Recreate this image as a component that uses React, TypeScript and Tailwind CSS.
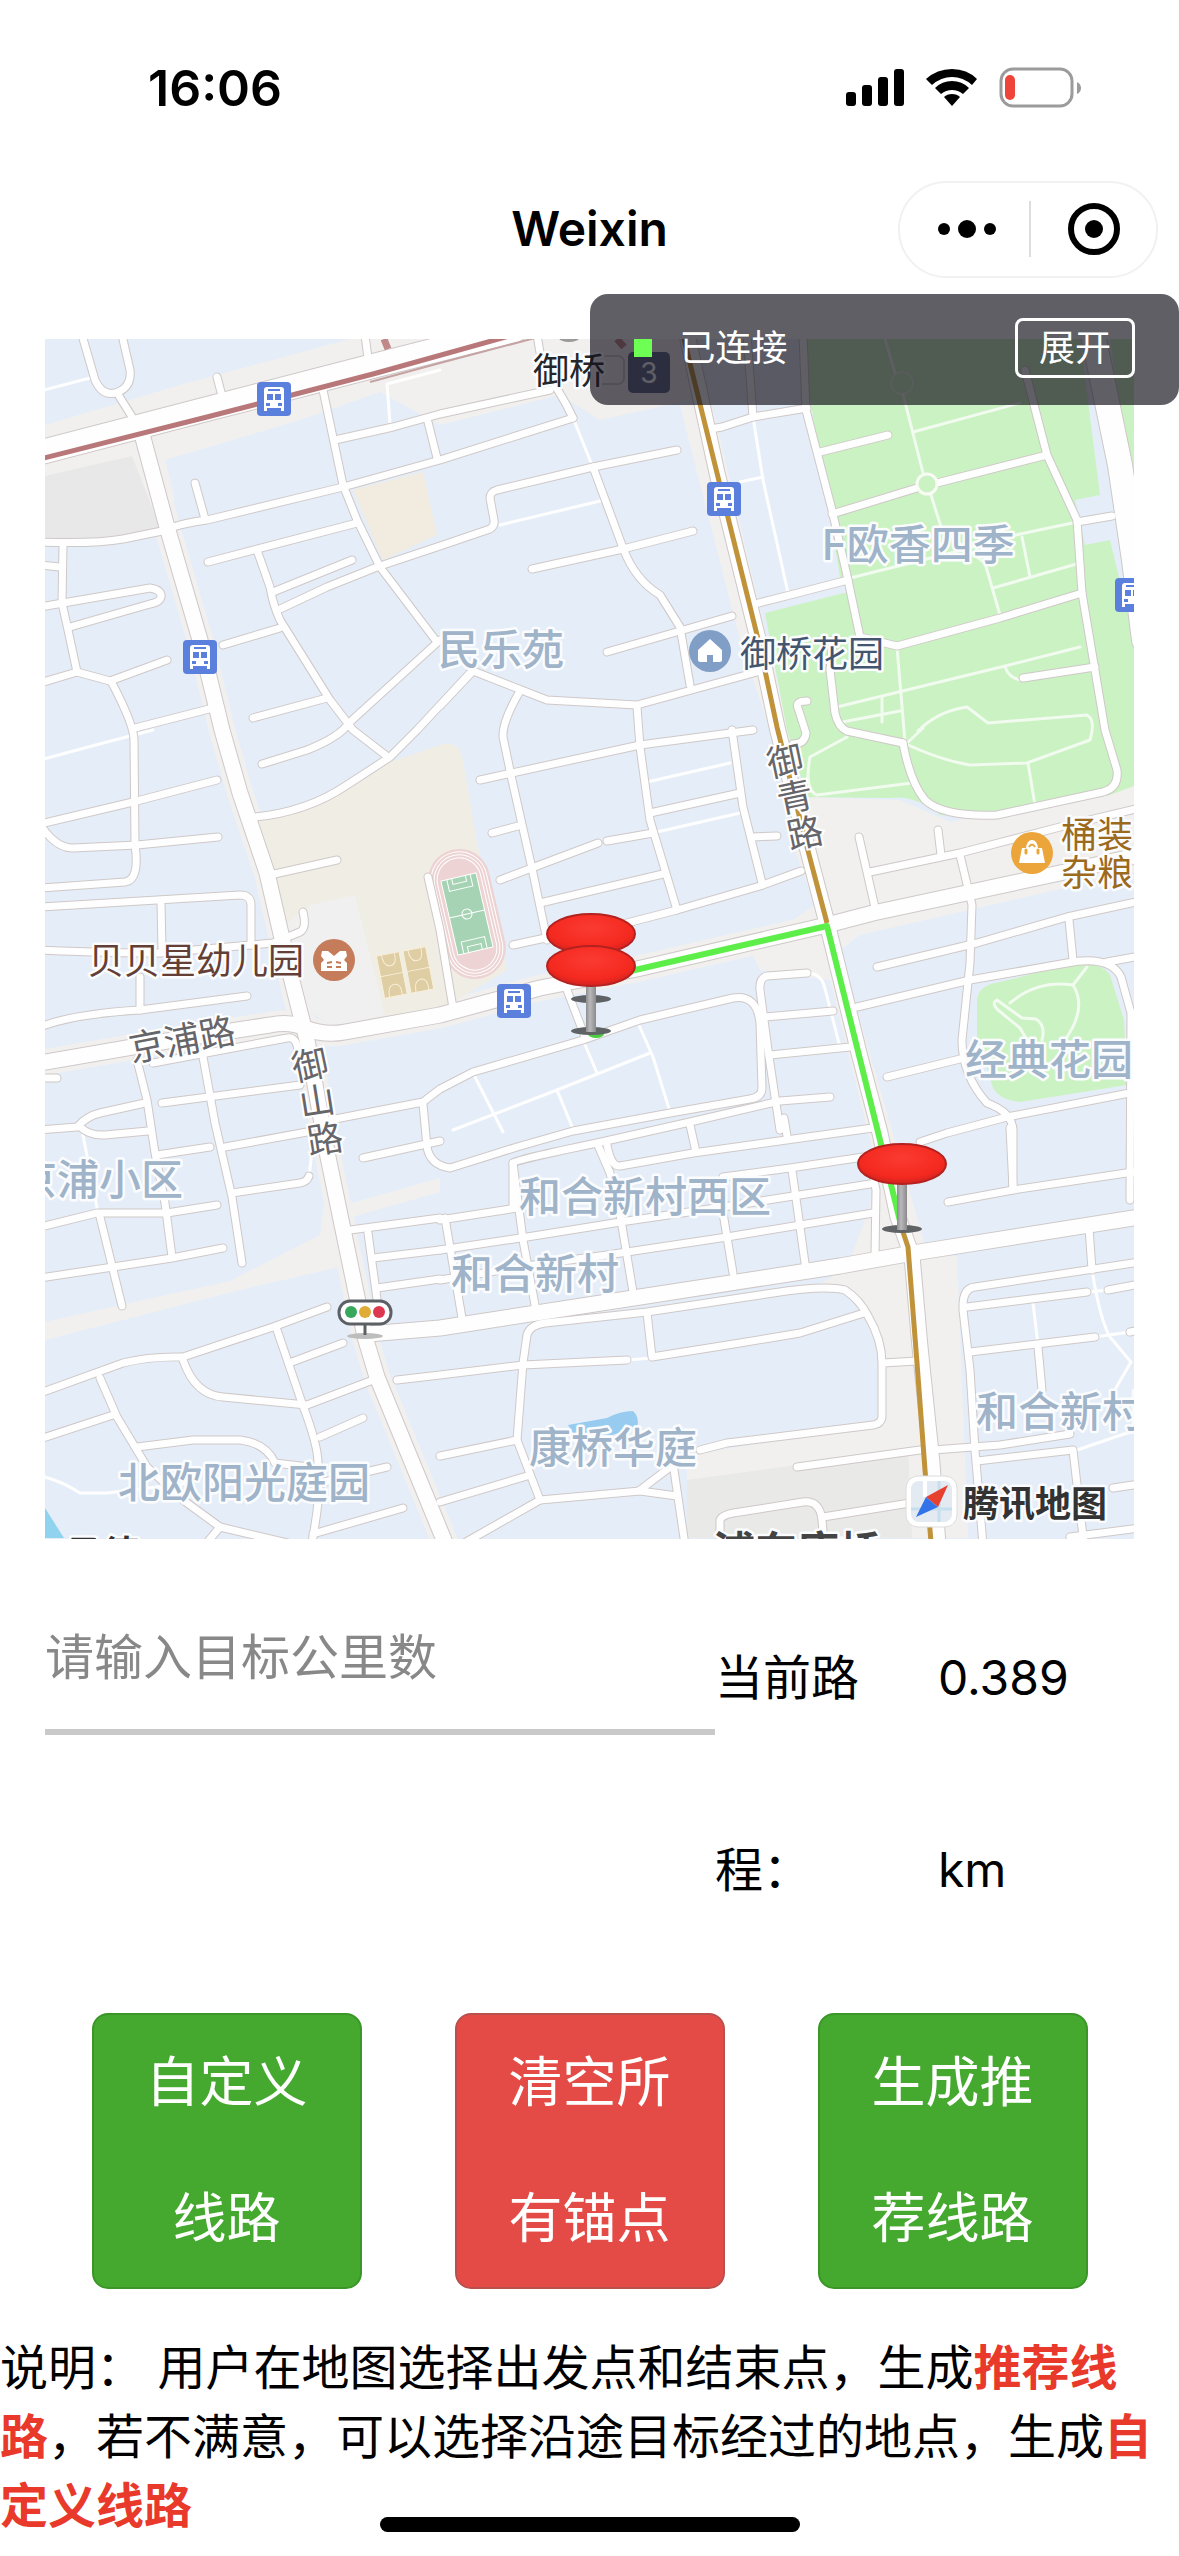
import { useState } from 'react';

type MapLabel = {
	text: string;
	x: number;
	y: number;
	size?: number;
	color?: string;
	rotate?: number;
	weight?: number;
};

const mainRoads = [
	'M143 438 L167 527 L200 640 L222 730 L240 793 L267 873 L290 973 L307 1040 L328 1157 L357 1297 L365 1337 L377 1377 L437 1523 L446 1545',
	'M40 1063 L173 1040 L270 1025 Q290 1021 305 1028 Q325 1036 345 1032 L440 1015 L540 988 L637 969 L827 925 L873 913 L1060 873 L1140 855',
	'M686 330 L717 473 L760 647 L777 727 L807 847 L827 923 L860 1057 L880 1133 L898 1217 L912 1256 L920 1347 L932 1463 L938 1545',
	'M368 1334 L440 1328 L640 1297 L840 1266 L913 1253 L1140 1217',
];

const wideRoads = [
	'M30 455 L207 409 L373 366 L515 330',
	'M1091 325 L1120 465 L1134 560 L1144 640',
];

const sideRoads = [
	// north west
	'M82 335 L95 380 Q102 396 115 393 Q132 388 130 370 L122 335',
	'M119 396 L134 420',
	'M217 377 L222 396',
	'M365 335 L368 358',
	'M323 390 L343 485 L357 520 L380 567 L437 642',
	'M335 440 L393 427 L440 414 L550 390',
	'M428 422 L437 458',
	'M173 527 Q185 523 207 520 L343 487 L440 460 L573 418',
	'M195 483 L205 519',
	'M208 562 L357 523',
	'M258 553 L270 587 Q273 605 280 620 L330 700 L353 730 L388 757',
	'M273 592 L352 560',
	'M278 610 L327 587 L377 567 L440 546 L490 529 Q495 526 494 520 L490 498 Q490 492 497 490 L593 467 L677 450',
	'M223 645 L280 628',
	'M253 718 L327 698',
	'M440 640 L350 722 Q340 737 307 750 L262 764',
	'M40 542 Q95 544 123 539 L167 530',
	'M63 546 L62 603 L68 630 L77 672',
	'M40 565 L60 567',
	'M40 607 L150 588 Q162 590 161 597 Q160 602 150 604 L70 627',
	'M40 683 L77 672 L110 681 L167 660',
	'M112 683 Q134 725 134 740 L135 845 Q140 880 125 882 L40 888',
	'M135 728 L213 708',
	// west
	'M40 824 L133 802 L217 780',
	'M40 824 Q55 848 73 848 L137 845 L218 837',
	'M255 817 Q307 812 347 785 L390 757 L417 730 L470 673',
	'M270 875 L337 860',
	'M40 907 L240 895 Q251 895 251 905 L251 945',
	'M40 950 Q110 953 160 953 L273 943 L300 932 Q307 928 303 912',
	'M161 903 L162 950',
	'M140 977 L140 1010',
	'M40 1027 Q73 1014 140 1010 L247 996',
	'M153 1063 L287 1038 Q296 1036 298 1050',
	'M137 1060 L147 1100 L155 1153 L165 1203 L172 1257',
	'M203 1057 L215 1123 L232 1197 L242 1263',
	'M40 1078 L57 1078',
	'M162 1103 L300 1085',
	'M40 1130 L77 1127 Q87 1116 100 1113 L145 1103',
	'M80 1127 Q90 1136 105 1135 L148 1131',
	'M428 877 L440 930 L453 1008',
	'M330 1120 L423 1102 L440 1089 L473 1072 L583 1040 L640 1020 L733 998 Q757 994 760 1023 L762 1088 Q762 1097 750 1099 L670 1113 L573 1131 L517 1147 L450 1168 Q430 1165 427 1147 L423 1104',
	'M363 1158 L440 1141',
	// centre
	'M537 335 L543 370 Q560 390 573 418',
	'M593 467 L623 548 Q635 580 660 595 L680 627 L690 685',
	'M532 569 L623 549 L693 531',
	'M607 652 L732 616',
	'M440 706 L473 671 L547 700 L637 705 L757 672',
	'M520 691 Q502 722 503 737 L512 780 L533 873 L547 940',
	'M637 707 L640 747 L650 820 L677 910',
	'M710 429 L722 427 L753 417 L807 408',
	'M747 335 L753 417',
	'M755 604 L790 595 L848 580',
	'M480 780 L640 745 L753 730',
	'M732 730 L743 807 L762 883',
	'M650 813 L740 793',
	'M492 833 L518 826',
	'M500 880 L537 866 L598 843',
	'M607 841 L653 833',
	'M540 903 L663 874',
	'M600 930 L677 910 L760 886 L801 871',
	'M752 837 L777 836',
	'M513 945 L550 937',
	'M567 990 L585 1037',
	'M807 973 L767 976 Q759 978 760 990 L768 1050 L780 1130',
	'M765 1017 L833 1011',
	'M770 1055 L850 1047',
	'M513 1208 L513 1163 Q515 1160 597 1143 L690 1122 L780 1101 L830 1097',
	// north east
	'M803 335 L806 410 L832 510 L848 580 L860 637 L897 646 L1000 618 L1082 593',
	'M820 452 L888 435',
	'M832 514 L917 488',
	'M937 483 L1047 455',
	'M1025 370 L1047 455 L1077 520 L1082 593 L1105 730 L1117 770 Q1119 788 1103 792 L997 815 Q943 817 925 800 Q910 782 903 743',
	'M1077 522 L1112 516',
	'M833 640 L830 670 L835 713 Q838 727 847 731 L903 743',
	'M807 701 Q795 701 798 708 L806 733 Q805 744 793 744',
	'M1023 678 L1095 667',
	// east
	'M859 837 L876 912',
	'M870 872 L960 853 L1060 827 L1140 808',
	'M938 830 L941 855',
	'M960 855 L972 905 L970 963 L962 1040 Q962 1075 987 1103 Q1012 1112 1013 1130 L1013 1190',
	'M877 967 L977 943 L1067 917 L1140 901',
	'M1069 920 L1073 960',
	'M857 1007 L970 980 L1067 963 Q1110 955 1121 977 L1131 1013 L1130 1200',
	'M1107 962 L1140 956',
	'M887 1077 L960 1059',
	'M920 1142 L947 1133 L1007 1117 L1140 1091',
	'M948 1202 L1013 1190 L1140 1171',
	// south centre
	'M440 1220 L517 1208 L540 1203',
	'M513 1163 L523 1240 L535 1305',
	'M440 1250 L527 1237 L627 1221 L723 1207 L870 1184',
	'M445 1218 L462 1318',
	'M597 1143 L610 1173 L621 1220 L633 1292',
	'M607 1145 Q611 1167 620 1166 L693 1153 L880 1127',
	'M690 1125 L696 1152',
	'M784 1118 L787 1136',
	'M723 1177 L790 1168 L870 1156',
	'M440 1280 L540 1264 L607 1255 L727 1237 L873 1213',
	'M723 1213 L733 1273',
	'M792 1170 L805 1263',
	'M870 1160 L876 1190 L875 1255',
	'M397 1380 L440 1375 L523 1365 L627 1360',
	'M540 1500 L517 1440 L523 1363 L527 1335 Q530 1325 545 1323 L647 1312 L773 1293 Q825 1285 845 1290 Q860 1300 868 1316 Q882 1340 882 1363 L882 1417 Q881 1424 873 1425 L727 1443 L700 1450',
	'M647 1313 L652 1357 L740 1343 L800 1333 L864 1313',
	'M440 1456 L517 1440',
	'M440 1502 L527 1476',
	'M466 1542 L540 1500 L640 1491 L677 1496',
	'M640 1490 L673 1465',
	'M673 1463 L685 1545',
	'M797 1467 L920 1450',
	'M720 1542 L720 1520 Q722 1514 740 1512 L803 1502 Q820 1500 822 1520 L824 1542',
	'M823 1517 L910 1503',
	// south east
	'M883 1363 L917 1361',
	'M1010 1128 L1013 1188',
	'M1089 1228 L1092 1270',
	'M1140 1262 L975 1287 Q962 1288 963 1310 L970 1370 L975 1450 L983 1545',
	'M967 1307 L1087 1292',
	'M1108 1290 L1140 1284',
	'M970 1352 L1095 1337',
	'M1130 1332 L1140 1330',
	'M1038 1347 L1042 1390',
	'M933 1450 L1000 1445 L1070 1434',
	'M977 1461 L1073 1450 L1084 1545',
	'M1113 1488 L1140 1484',
	'M1070 1537 L1140 1528',
	// south west
	'M157 1155 L210 1147',
	'M225 1147 L307 1132',
	'M232 1193 L300 1183 Q307 1182 309 1176',
	'M40 1227 L97 1213 L167 1213 L217 1205',
	'M40 1278 L113 1267 L172 1258 L223 1248',
	'M100 1217 L122 1306',
	'M40 1393 L123 1363 Q150 1356 183 1357 L273 1327 L327 1307',
	'M100 1378 L117 1417 L147 1467 L183 1500 L220 1527 L296 1545',
	'M40 1439 L113 1415',
	'M137 1447 L193 1440 L240 1440 Q266 1443 275 1463 L317 1468',
	'M183 1360 Q195 1395 223 1397 L307 1405 L373 1380',
	'M277 1330 L302 1403 Q318 1445 318 1463 Q322 1490 312 1542',
	'M292 1362 L343 1343',
	'M320 1437 L363 1418',
	'M320 1483 L387 1467',
	'M313 1534 L403 1508',
	'M220 1527 L205 1545',
	'M350 1230 L440 1218',
	'M368 1233 L377 1299',
	'M373 1258 L440 1250',
	'M377 1288 L440 1279',
];

const footPaths = [
	'M40 391 L90 378',
	'M440 370 L387 384 L390 424',
	'M40 760 Q95 745 153 730',
	'M573 418 L592 465',
	'M500 525 L600 501',
	'M753 417 L763 480 L788 593',
	'M740 482 L763 477',
	'M647 782 L730 763',
	'M657 832 L740 813',
	'M583 1040 L597 1073',
	'M453 1130 L557 1090 L650 1053',
	'M638 1023 L653 1057 L670 1112',
	'M473 1073 L503 1132',
	'M557 1090 L573 1129',
	'M807 973 Q820 973 824 985 L840 1047',
	'M82 1130 L98 1213',
	'M40 1476 Q60 1480 80 1493 L107 1493 L190 1483',
	'M309 1178 L312 1150',
	'M627 1360 L652 1358',
	'M1033 1303 L1038 1345',
	'M1092 1270 Q1100 1320 1110 1337 L1131 1362 L1113 1393',
	'M1077 1450 L1124 1434 L1140 1430',
	'M1087 1292 L1108 1290',
	'M1095 1337 L1130 1332',
];

const parkPaths = [
	'M885 339 L895 373',
	'M903 394 L923 473',
	'M931 495 L942 530 L985 563 L1000 615',
	'M913 432 L1020 403',
	'M850 578 L947 554 L1020 534 L1077 522',
	'M1022 537 L1030 577',
	'M993 588 L1080 563',
	'M897 647 L905 742',
	'M837 707 L1005 666 L1080 647',
	'M1005 667 Q1010 680 1023 680',
	'M882 697 L882 722',
	'M837 723 L900 711',
	'M918 731 Q938 711 967 707 L988 723 L1087 715 Q1096 720 1090 740 L1027 763 L970 765 Q940 760 906 744 L923 728',
	'M1028 763 L1035 805',
	'M847 737 L810 757 Q804 790 817 795 L912 783',
	'M997 1000 L1022 1018 L1036 1019 Q1046 1025 1042 1040',
	'M997 1000 Q991 1003 998 1010 L1020 1028 L1027 1040',
	'M1010 1003 Q1037 980 1073 985 Q1087 1007 1067 1037',
	'M1073 985 L1087 967',
];

const areaLabels: MapLabel[] = [
	{ text: '民乐苑', x: 438, y: 665 },
	{ text: 'F欧香四季', x: 822, y: 560 },
	{ text: '京浦小区', x: 15, y: 1195 },
	{ text: '北欧阳光庭园', x: 118, y: 1498 },
	{ text: '和合新村西区', x: 519, y: 1212 },
	{ text: '和合新村', x: 451, y: 1289 },
	{ text: '康桥华庭', x: 529, y: 1463 },
	{ text: '经典花园', x: 965, y: 1075 },
	{ text: '和合新村', x: 976, y: 1427 },
];

const poiLabels: MapLabel[] = [
	{ text: '御桥', x: 533, y: 384, color: '#26262a' },
	{ text: '御桥花园', x: 740, y: 667, color: '#44566f' },
	{ text: '贝贝星幼儿园', x: 88, y: 974, color: '#643f36' },
	{ text: '桶装', x: 1061, y: 848, color: '#9c6a1c' },
	{ text: '杂粮', x: 1061, y: 886, color: '#9c6a1c' },
	{ text: '马德', x: 67, y: 1567, color: '#333', weight: 700 },
	{ text: '浦东康桥', x: 713, y: 1567, color: '#444', weight: 700, size: 42 },
	{ text: '腾讯地图', x: 963, y: 1517, color: '#333', weight: 700 },
];

// road names are set one character at a time, each centred on its own point
const roadLabels: MapLabel[] = [
	{ text: '京', x: 147, y: 1046, rotate: -11 },
	{ text: '浦', x: 182, y: 1040, rotate: -11 },
	{ text: '路', x: 217, y: 1033, rotate: -11 },
	{ text: '御', x: 310, y: 1065, rotate: -12 },
	{ text: '山', x: 317, y: 1101, rotate: -9 },
	{ text: '路', x: 325, y: 1139, rotate: -9 },
	{ text: '御', x: 785, y: 761, rotate: -12 },
	{ text: '青', x: 795, y: 797, rotate: -12 },
	{ text: '路', x: 805, y: 833, rotate: -12 },
];

const stations = [
	[274, 399],
	[200, 657],
	[724, 499],
	[1132, 595],
	[514, 1001],
];

const pins = [
	[591, 999],
	[591, 1031],
	[902, 1229],
];

const Roads = ({
	paths,
	width,
	casing,
}: {
	paths: string[];
	width: number;
	casing?: boolean;
}) => (
	<g
		fill="none"
		stroke={casing ? '#cfc8c8' : '#fefefe'}
		strokeWidth={width}
		strokeLinecap="round"
		strokeLinejoin="round"
	>
		{paths.map((d) => (
			<path key={d} d={d} />
		))}
	</g>
);

const Label = ({ text, x, y, size, color, weight }: MapLabel) => (
	<text
		x={x}
		y={y}
		fontSize={size ?? 36}
		fontWeight={weight ?? 400}
		fill={color}
		stroke="#fbfcfe"
		strokeWidth={5}
		strokeLinejoin="round"
		paintOrder="stroke"
	>
		{text}
	</text>
);

const Station = ({ x, y }: { x: number; y: number }) => (
	<g transform={`translate(${x} ${y})`}>
		<rect x="-17" y="-17" width="34" height="34" rx="4" fill="#5b7fdd" />
		<path
			d="M-7 -12 H7 Q10 -12 10 -9 V12 H7 V9 H-7 V12 H-10 V-9 Q-10 -12 -7 -12Z"
			fill="#fff"
		/>
		<path d="M-6 -9 H6" stroke="#5b7fdd" strokeWidth="2" />
		<path
			d="M-7 -5 H-1 V1 H-7Z M1 -5 H7 V1 H1Z M-8 4 H-4 V7 H-8Z M4 4 H8 V7 H4Z"
			fill="#5b7fdd"
		/>
	</g>
);

const Pin = ({ x, y }: { x: number; y: number }) => (
	<g transform={`translate(${x} ${y})`}>
		<ellipse rx="20" ry="4" fill="#5f6366" />
		<rect x="-5" y="-48" width="10" height="49" fill="url(#stem)" />
		<ellipse
			cy="-65"
			rx="44"
			ry="20"
			fill="url(#head)"
			stroke="#b3221f"
			strokeWidth="2"
		/>
	</g>
);

const RouteMap = () => (
	<svg
		viewBox="45 339 1089 1200"
		className="block w-full h-auto"
		role="img"
		aria-label="地图"
	>
		<defs>
			<radialGradient id="head" cx="50%" cy="35%" r="60%">
				<stop offset="0" stopColor="#fb3b32" />
				<stop offset="0.8" stopColor="#f4291f" />
				<stop offset="1" stopColor="#dc2420" />
			</radialGradient>
			<linearGradient id="stem">
				<stop offset="0" stopColor="#8d8d8f" />
				<stop offset="0.4" stopColor="#b9b9bb" />
				<stop offset="1" stopColor="#8a8a8c" />
			</linearGradient>
		</defs>

		{/* land */}
		<rect x="45" y="339" width="1089" height="1200" fill="#e5eef8" />
		<g fill="#f1f0ee">
			<path d="M45 425 L180 385 L350 339 H690 V400 L600 420 L560 395 L440 425 L380 392 L300 420 L165 460 L175 500 L130 500 L45 480Z" />
			<path d="M680 405 L712 405 L790 735 L800 797 L900 800 L950 822 L1134 782 V872 L860 935 L840 950 L925 1245 L957 1257 L968 1538 H687 V1455 L880 1425 L884 1360 L860 1310 L847 1290 L820 1284 L847 1268 L880 1180 L830 980 L760 970 L750 950 L815 905 L795 850 L790 790 L740 640Z" />
			<path d="M45 1322 L130 1303 L230 1281 L320 1235 L330 1160 L345 1205 L440 1178 L440 1192 L352 1217 L360 1262 L240 1290 L45 1340Z" />
		</g>
		<g fill="none" stroke="#f1f0ee" strokeWidth="26">
			{mainRoads.slice(0, 2).map((d) => (
				<path key={d} d={d} />
			))}
		</g>
		<path d="M45 476 L132 456 L160 528 L122 536 L45 540Z" fill="#e8e8e8" />
		<path d="M353 490 L423 472 L437 535 L383 560Z" fill="#f1ebe0" />
		<path
			d="M253 830 L257 818 Q320 812 390 762 L440 745 Q457 740 462 755 L477 843 L507 970 L440 1010 L345 1025 L310 1005Z"
			fill="#f0ede4"
		/>
		<path d="M285 925 L310 905 L355 895 L385 1015 L330 1028 L310 1010Z" fill="#f0f0f0" />
		<path d="M687 1480 L908 1450 L912 1538 H687Z" fill="#e9e9e8" />
		<g fill="#cbf2c2">
			<path d="M800 339 H1080 L1100 495 L1075 500 L1085 545 L1110 540 L1134 640 V786 L1110 795 L990 818 L940 815 Q915 795 890 798 L807 797 L787 730 L765 613 L848 592 L840 577Z" />
			<path d="M1110 339 H1134 V500Z" />
			<path d="M977 1000 Q978 985 1000 982 L1067 965 Q1100 960 1110 975 L1124 1020 L1127 1085 L1020 1102 Q1000 1100 993 1088 L977 1037Z" />
		</g>
		<path
			d="M568 1425 L607 1418 Q620 1411 633 1411 Q640 1417 637 1428 L612 1435 L573 1433Z"
			fill="#97ccf0"
		/>
		<path d="M45 1508 L64 1538 H45Z" fill="#8fd3ef" />

		{/* school ground */}
		<g transform="translate(467 914) rotate(-13)" fill="none">
			<rect x="-31" y="-66" width="62" height="132" rx="31" fill="#edd3d3" />
			<g stroke="#fff" strokeWidth="1">
				<rect x="-28" y="-63" width="56" height="126" rx="28" />
				<rect x="-25" y="-60" width="50" height="120" rx="25" />
				<rect x="-22" y="-57" width="44" height="114" rx="22" />
				<rect x="-18" y="-38" width="36" height="76" fill="#a6d3b4" />
				<path d="M-18 0 H18 M-12 -38 V-26 H12 V-38 M-7 -38 V-32 H7 V-38 M-12 38 V26 H12 V38 M-7 38 V32 H7 V38" />
				<circle r="5" />
			</g>
		</g>
		<g transform="translate(405 972) rotate(-11)" fill="#dfcda4" stroke="#f8efd8">
			<rect x="-25" y="-21" width="23" height="43" />
			<rect x="2" y="-21" width="23" height="43" />
			<path
				d="M-25 0 H-2 M2 0 H25 M-20 -21 Q-20 -9 -13 -9 T-7 -21 M7 -21 Q7 -9 14 -9 T20 -21 M-20 22 Q-20 10 -13 10 T-7 22 M7 22 Q7 10 14 10 T20 22"
				fill="none"
			/>
		</g>

		{/* roads */}
		<Roads paths={footPaths} width={3} />
		<g opacity="0.75">
			<Roads paths={parkPaths} width={3} />
		</g>
		<Roads paths={sideRoads} width={9} casing />
		<Roads paths={mainRoads} width={17} casing />
		<Roads paths={wideRoads} width={26} casing />
		<Roads paths={sideRoads} width={7} />
		<Roads paths={mainRoads} width={15} />
		<Roads paths={wideRoads} width={24} />
		<g fill="none" stroke="#f8fcf5" strokeWidth="3">
			<circle cx="927" cy="484" r="10" fill="#cbf2c2" />
			<circle cx="902" cy="383" r="11" strokeWidth="2" opacity="0.5" />
		</g>

		{/* metro lines */}
		<g fill="none">
			<path d="M40 459 L207 417 L373 374 L520 333" stroke="#b87779" strokeWidth="5" />
			<path d="M370 382 L440 363 L535 338" stroke="#c5a3a3" strokeWidth="2" />
			<path d="M384 339 L388 349 M617 339 L624 347" stroke="#c18888" strokeWidth="7" />
			<path
				d="M683 335 L717 473 L760 647 L777 727 L807 847 L827 923"
				stroke="#c0933a"
				strokeWidth="5"
			/>
			<path
				d="M902 1229 L908 1247 L917 1363 L925 1470 L931 1542"
				stroke="#c0933a"
				strokeWidth="5"
			/>
			<rect x="596" y="356" width="28" height="28" rx="6" stroke="#cfcfcf" strokeWidth="2" />
		</g>
		<ellipse cx="569" cy="338" rx="10" ry="4" fill="#9a9a9a" />
		<rect x="628" y="352" width="42" height="41" rx="5" fill="#5e6b8c" />
		<text x="649" y="383" fontSize="28" textAnchor="middle" fill="#fff">
			3
		</text>

		{/* names */}
		{areaLabels.map((label) => (
			<Label
				key={`${label.text}-${label.x}`}
				{...label}
				size={42}
				color="#9fb3c9"
				weight={500}
			/>
		))}
		{roadLabels.map(({ text, x, y, rotate }) => (
			<text
				key={`${x}-${y}`}
				transform={`translate(${x} ${y}) rotate(${rotate})`}
				y="13"
				fontSize="36"
				textAnchor="middle"
				fill="#66666a"
				stroke="#fff"
				strokeWidth="4"
				paintOrder="stroke"
			>
				{text}
			</text>
		))}
		{poiLabels.map((label) => (
			<Label key={label.text} {...label} />
		))}

		{stations.map(([x, y]) => (
			<Station key={`${x}-${y}`} x={x} y={y} />
		))}
		<g transform="translate(710 651)">
			<circle r="21" fill="#819fc6" />
			<path
				d="M-12 -1 L0 -12 L12 -1 V9 Q12 11 10 11 H3 V4 H-3 V11 H-10 Q-12 11 -12 9Z"
				fill="#fff"
			/>
		</g>
		<g transform="translate(334 960)">
			<circle r="21" fill="#c47c5a" />
			<path
				d="M-12 -9 L-6 -9 L0 -4 L6 -9 L12 -9 L13 -4 L10 0 L13 3 V11 H-13 V3 L-10 0 L-13 -4Z"
				fill="#fff"
			/>
			<path d="M-7 3 L-2 2 M2 2 L7 3 M-7 7 H-2 M2 7 H7" stroke="#c47c5a" strokeWidth="2" />
		</g>
		<g transform="translate(1032 853)">
			<circle r="21" fill="#eca53a" />
			<path
				d="M-10 -5 H-6 Q-5 -13 0 -13 T6 -5 H10 L13 10 H-13Z"
				fill="#fff"
			/>
			<path d="M-6 -3 V0 M6 -3 V0" stroke="#eca53a" strokeWidth="3" strokeLinecap="round" />
			<path d="M-3 -6 Q0 -11 3 -6" fill="none" stroke="#eca53a" strokeWidth="2" />
		</g>
		<g transform="translate(365 1312)">
			<ellipse cy="24" rx="18" ry="3" fill="#bdbdbd" />
			<path d="M0 12 V23" stroke="#5d6165" strokeWidth="3" />
			<rect
				x="-26"
				y="-11"
				width="52"
				height="23"
				rx="11"
				fill="#fff"
				stroke="#5d6165"
				strokeWidth="3"
			/>
			<circle cx="-14" r="6" fill="#37a75c" />
			<circle r="6" fill="#e0ac35" />
			<circle cx="14" r="6" fill="#dd3850" />
		</g>

		{/* walked route */}
		<path
			d="M600 978 L827 926 L902 1229"
			fill="none"
			stroke="#5eee4a"
			strokeWidth="6"
			strokeLinejoin="round"
		/>
		<ellipse cx="596" cy="1034" rx="8" ry="4" fill="#4ccc42" />
		{pins.map(([x, y]) => (
			<Pin key={`${x}-${y}`} x={x} y={y} />
		))}

		<g>
			<rect x="906" y="1476" width="51" height="51" rx="12" fill="#fff" stroke="#dcdcdc" />
			<rect x="911" y="1481" width="41" height="41" rx="8" fill="#e3eaf2" />
			<path d="M911 1509 H952 M939 1481 V1522" stroke="#c5dfec" strokeWidth="3" />
			<path d="M925 1481 V1497" stroke="#fff" strokeWidth="4" />
			<path d="M948 1485 L926 1497 L938 1507Z" fill="#e8402f" />
			<path d="M916 1517 L926 1497 L938 1507Z" fill="#3273ea" />
		</g>
	</svg>
);

const StatusBar = () => (
	<div className="flex h-[175px] items-center justify-between pl-[148px] pr-[97px]">
		<span className="text-[50px] font-semibold leading-none">16:06</span>
		<svg viewBox="846 66 236 44" className="h-[44px] w-[236px]" aria-hidden="true">
			<rect x="846" y="92" width="10" height="14" rx="3" />
			<rect x="862" y="85" width="10" height="21" rx="3" />
			<rect x="878" y="77" width="10" height="29" rx="3" />
			<rect x="894" y="69" width="10" height="37" rx="3" />
			<path d="M952 69 Q967 69 977 79 L972 85 Q963 77 952 77 T932 85 L926 79 Q937 69 952 69Z" />
			<path d="M952 81 Q962 81 969 88 L963 94 Q958 90 952 90 T941 94 L935 88 Q942 81 952 81Z" />
			<path d="M952 94 Q957 94 960 97 L952 106 L944 97 Q947 94 952 94Z" />
			<rect
				x="1001"
				y="69"
				width="71"
				height="37"
				rx="12"
				fill="none"
				stroke="#9b9b9b"
				strokeWidth="3"
			/>
			<path d="M1077 82 Q1081 84 1081 88 T1077 94Z" fill="#9b9b9b" />
			<rect x="1005" y="75" width="10" height="25" rx="5" fill="#ee4439" />
		</svg>
	</div>
);

const NavBar = () => (
	<header className="grid h-[108px] grid-cols-[1fr_auto_1fr] items-center">
		<h1 className="col-start-2 text-[48px] font-semibold leading-none">Weixin</h1>
		<div className="mr-[21px] flex h-[97px] w-[260px] items-center justify-self-end rounded-full border-2 border-[#f1f1f1] pl-1">
			<button type="button" aria-label="更多" className="flex flex-1 justify-center">
				<svg viewBox="0 0 60 20" className="h-5 w-[60px]">
					<circle cx="7" cy="10" r="6" />
					<circle cx="30" cy="10" r="9" />
					<circle cx="53" cy="10" r="6" />
				</svg>
			</button>
			<span className="h-14 w-0.5 bg-[#dddddd]" />
			<button type="button" aria-label="关闭" className="flex flex-1 justify-center">
				<svg viewBox="0 0 54 54" className="size-[54px]">
					<circle cx="27" cy="27" r="23" fill="none" stroke="#000" strokeWidth="6" />
					<circle cx="27" cy="27" r="9" />
				</svg>
			</button>
		</div>
	</header>
);

const actions = [
	{ name: '自定义线路', style: 'bg-[#44a92e] border-[#3a9627]' },
	{ name: '清空所有锚点', style: 'bg-[#e44b46] border-[#b9504c]' },
	{ name: '生成推荐线路', style: 'bg-[#44a92e] border-[#3a9627]' },
];

const App = () => {
	const [target, setTarget] = useState('');

	return (
		<div className="relative min-h-screen overflow-hidden bg-white font-[Inter,'Noto_Sans_CJK_SC',sans-serif] text-black">
			<StatusBar />
			<NavBar />

			<div className="absolute right-0 top-[294px] z-10 flex h-[111px] w-1/2 items-center rounded-[18px] bg-[#13111b]/67 px-[44px] pb-1 text-[36px] leading-none text-white">
				<span className="mr-7 size-[18px] bg-[#6dff54]" />
				<span>已连接</span>
				<button
					type="button"
					className="ml-auto h-[60px] w-[120px] rounded-lg border-3 border-white leading-none"
				>
					展开
				</button>
			</div>

			<main className="mx-[45px] mt-[56px]">
				<RouteMap />

				<div className="mt-[43px] grid grid-cols-[670fr_223fr_196fr] items-start text-[48px] leading-[192px]">
					<input
						type="text"
						aria-label="请输入目标公里数"
						placeholder="请输入目标公里数"
						value={target}
						onChange={(e) => setTarget(e.target.value)}
						className="h-[153px] w-full border-b-6 border-[#c9c9c9] pt-1 text-[49px] leading-normal outline-none placeholder:text-[#888888]"
					/>
					<span>当前路程：</span>
					<span>
						0.389
						<br />
						km
					</span>
				</div>

				<div className="mt-[47px] grid grid-cols-3 justify-items-center">
					{actions.map(({ name, style }) => (
						<button
							key={name}
							type="button"
							className={`w-[270px] rounded-2xl border-2 px-[42px] text-[54px] leading-[136px] text-white ${style}`}
						>
							{name}
						</button>
					))}
				</div>
			</main>

			<p className="mt-[44px] text-[48px] leading-[69px]">
				说明： 用户在地图选择出发点和结束点，生成
				<strong className="font-bold text-[#e8392b]">推荐线路</strong>
				，若不满意，可以选择沿途目标经过的地点，生成
				<strong className="font-bold text-[#e8392b]">自定义线路</strong>
			</p>

			<div className="absolute bottom-6 left-1/2 h-[15px] w-[420px] -translate-x-1/2 rounded-full bg-black" />
		</div>
	);
};

export default App;
